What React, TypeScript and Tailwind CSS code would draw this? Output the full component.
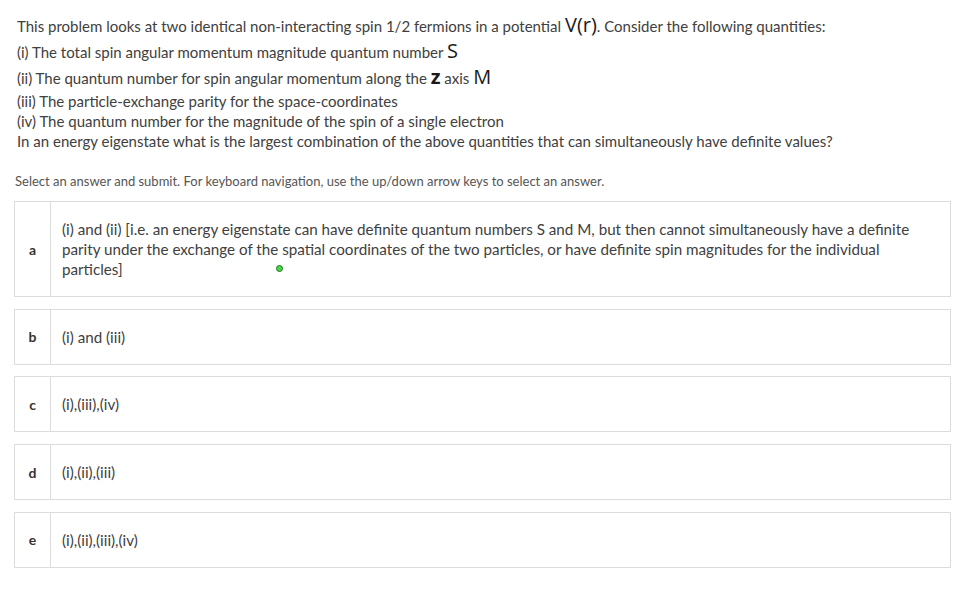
import React from "react";

const font = { fontFamily: "Lato, 'Noto Sans', sans-serif" };

function M({ children }: { children: React.ReactNode }) {
  return (
    <span className="text-[20px] text-[#1a1a1a] leading-[20px]" style={{ fontFamily: "'Open Sans', 'Noto Sans', sans-serif" }}>
      {children}
    </span>
  );
}

const options: { k: string; lines: string[]; dot?: boolean }[] = [
  {
    k: "a",
    lines: [
      "(i) and (ii) [i.e. an energy eigenstate can have definite quantum numbers S and M, but then cannot simultaneously have a definite",
      "parity under the exchange of the spatial coordinates of the two particles, or have definite spin magnitudes for the individual",
      "particles]",
    ],
    dot: true,
  },
  { k: "b", lines: ["(i) and (iii)"] },
  { k: "c", lines: ["(i),(iii),(iv)"] },
  { k: "d", lines: ["(i),(ii),(iii)"] },
  { k: "e", lines: ["(i),(ii),(iii),(iv)"] },
];

export default function App() {
  return (
    <div className="w-[962px] h-[609px] bg-white text-[#404040]" style={font}>
      <div className="pl-[17px] pt-[14px] text-[15px]">
        <div className="h-[25px] leading-[25px]">
          This problem looks at two identical non-interacting spin 1/2 fermions in a potential <M>V(r)</M>. Consider the following quantities:
        </div>
        <div className="h-[26px] leading-[26px]">
          (i) The total spin angular momentum magnitude quantum number <M>S</M>
        </div>
        <div className="h-[26px] leading-[26px]">
          (ii) The quantum number for spin angular momentum along the <M><b>z</b></M> axis <M>M</M>
        </div>
        <div className="h-[20px] leading-[20px]">(iii) The particle-exchange parity for the space-coordinates</div>
        <div className="h-[20px] leading-[20px]">(iv) The quantum number for the magnitude of the spin of a single electron</div>
        <div className="h-[20px] leading-[20px]">
          In an energy eigenstate what is the largest combination of the above quantities that can simultaneously have definite values?
        </div>
      </div>
      <div className="pl-[15px] pt-[22px] text-[13px] text-[#555] leading-[16px]">
        Select an answer and submit. For keyboard navigation, use the up/down arrow keys to select an answer.
      </div>
      <div className="ml-[14px] mt-[12px] w-[937px] flex flex-col gap-[11.7px]">
        {options.map((o) => (
          <div key={o.k} className="flex border border-[#dcdcdc]">
            <div className="w-[36px] shrink-0 border-r border-[#dcdcdc] flex items-center justify-center text-[14px] font-bold text-[#333]">
              {o.k}
            </div>
            <div className="relative pl-[11px] py-[17px] text-[15.2px] leading-[20px] text-[#404040]">
              {o.lines.map((l, i) => (
                <div key={i}>{l}</div>
              ))}
              {o.dot && (
                <span className="absolute left-[225px] top-[63px] w-[7px] h-[7px] rounded-full bg-[#4cd44c] border-[1.5px] border-[#1a7a1a]" />
              )}
            </div>
          </div>
        ))}
      </div>
    </div>
  );
}
